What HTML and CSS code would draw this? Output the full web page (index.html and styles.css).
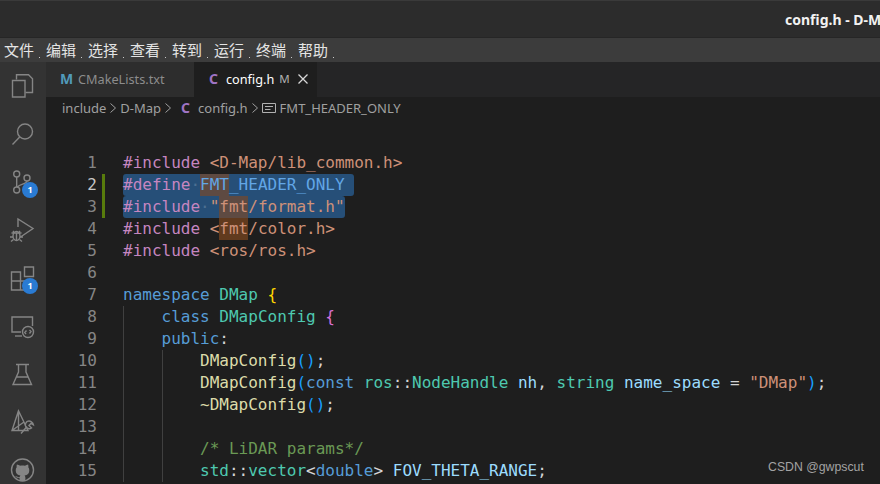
FILE: index.html
```html
<!DOCTYPE html>
<html lang="en">
  <head>
    <meta charset="UTF-8" />
    <title>config.h - D-Map</title>
    <link rel="stylesheet" href="styles.css">
  </head>
  <body>
    <div class="titlebar"><span class="title">config.h - D-M</span></div>
    <div class="menubar">
      <span class="menu-item">文件</span>
      <span class="menu-item">编辑</span>
      <span class="menu-item">选择</span>
      <span class="menu-item">查看</span>
      <span class="menu-item">转到</span>
      <span class="menu-item">运行</span>
      <span class="menu-item">终端</span>
      <span class="menu-item">帮助</span>
    </div>
    <div class="main">
      <div class="activitybar">
        <div class="activity">
          <svg viewBox="0 0 24 24"><path d="M5.5 5.5V.8H17.5L21.5 4.8V18.5H14.5"/><path d="M1.5 6.5H14V23H1.5Z"/></svg>
        </div>
        <div class="activity">
          <svg viewBox="0 0 24 24"><circle cx="14" cy="9.5" r="7.5"/><path d="M8.7 15L1.5 22.5"/></svg>
        </div>
        <div class="activity">
          <svg viewBox="0 0 24 24"><circle cx="5.7" cy="4" r="3"/><circle cx="5.7" cy="20" r="3"/><circle cx="16" cy="8" r="3"/><path d="M5.7 7V17M16 11C16 14 9 14 6.5 17"/></svg>
          <span class="badge">1</span>
        </div>
        <div class="activity">
          <svg viewBox="0 0 24 24"><path d="M7 9V1L22 10.5L9.5 19"/><ellipse cx="5.5" cy="18" rx="3.5" ry="4.5"/><path d="M.5 15H10.5M5.5 15V22.5M-1 19H2M9 19H12M0 23.5L2.5 21.5M11 23.5L8.5 21.5M2 13L3.5 15M9 13L7.5 15"/></svg>
        </div>
        <div class="activity">
          <svg viewBox="0 0 24 24"><path d="M13.5 1H22.5V10.5H13.5Z"/><path d="M.5 6H9.5V24H.5ZM.5 15H18.5V24H9.5"/></svg>
          <span class="badge">1</span>
        </div>
        <div class="activity">
          <svg viewBox="0 0 24 24"><path d="M10 18H1V3H21.5V12"/><path d="M4 22H11"/><circle cx="17" cy="18" r="5.5"/><path d="M15.5 16.5L13.8 18.5L15 20M18.5 16L20 17.5L18.5 19.5"/></svg>
        </div>
        <div class="activity">
          <svg viewBox="0 0 24 24"><path d="M5 2.5H18M7.5 2.5V10L2 22.5H20.5L15 10V2.5M5.5 15H17"/></svg>
        </div>
        <div class="activity">
          <svg viewBox="0 0 24 24"><path d="M7.5.8L1 20.5H17L7.5.8ZM7.5.8V20.5M1 20.5L13 12"/><path class="wrench" d="M10 23.5L16 16.5M14.5 13.5A4 4 0 0 0 20.5 18L18 15.5L20 13.5L22.5 15A4.5 4.5 0 0 0 16 11.5Z"/></svg>
        </div>
        <div class="activity">
          <svg viewBox="0 0 24 24"><circle cx="11.5" cy="12" r="11"/><path class="solid" d="M8.5 23V20C5.5 20.3 4.8 18.8 4.3 18L6.5 18.8C7.3 19.5 8 19.3 8.7 19C8.7 18.4 9 17.8 9.4 17.5C6.5 17 4.7 15.5 4.7 12.2C4.7 11 5.1 10.1 5.7 9.3C5.5 8.5 5.5 7.4 5.9 6.5C7.1 6.6 8.2 7.2 9 7.8C10.7 7.4 12.5 7.4 14 7.8C14.9 7.2 16 6.6 17.1 6.5C17.5 7.4 17.5 8.5 17.3 9.3C17.9 10.1 18.3 11 18.3 12.2C18.3 15.5 16.5 17 13.6 17.5C14.1 18 14.4 18.8 14.4 19.8V23Z"/></svg>
        </div>
      </div>
      <div class="workbench">
        <div class="tabs">
          <div class="tab">
            <span class="file-icon cmake">M</span>
            <span>CMakeLists.txt</span>
          </div>
          <div class="tab active">
            <span class="file-icon cfile">C</span>
            <span class="tab-name">config.h</span>
            <span class="tab-status">M</span>
            <svg class="tab-close" viewBox="0 0 12 12"><path d="M1.5 1.5L10.5 10.5M10.5 1.5L1.5 10.5"/></svg>
          </div>
        </div>
        <div class="breadcrumbs">
          <span>include</span>
          <svg class="chevron" viewBox="0 0 8 12"><path d="M1.5 1.5L6.5 6L1.5 10.5"/></svg>
          <span>D-Map</span>
          <svg class="chevron" viewBox="0 0 8 12"><path d="M1.5 1.5L6.5 6L1.5 10.5"/></svg>
          <span class="file-icon cfile crumb-icon">C</span>
          <span>config.h</span>
          <svg class="chevron" viewBox="0 0 8 12"><path d="M1.5 1.5L6.5 6L1.5 10.5"/></svg>
          <svg class="symbol" viewBox="0 0 14 12"><path d="M.5 1.5H13.5V10.5H.5ZM3 4.5H11M3 7.5H8.5"/></svg>
          <span>FMT_HEADER_ONLY</span>
        </div>
        <div class="editor">
          <div class="gutter">
            <div class="num">1</div>
            <div class="num current">2<i class="dirty"></i></div>
            <div class="num">3<i class="dirty"></i></div>
            <div class="num">4</div>
            <div class="num">5</div>
            <div class="num">6</div>
            <div class="num">7</div>
            <div class="num">8</div>
            <div class="num">9</div>
            <div class="num">10</div>
            <div class="num">11</div>
            <div class="num">12</div>
            <div class="num">13</div>
            <div class="num">14</div>
            <div class="num">15</div>
          </div>
          <div class="code">
            <div class="line"><span class="pp">#include</span> <span class="str">&lt;D-Map/lib_common.h&gt;</span></div>
            <div class="line"><span class="sel sel-eol"><span class="pp">#define</span><span class="ws">·</span><span class="word-sel macro">FMT</span><span class="macro">_HEADER_ONLY</span></span></div>
            <div class="line"><span class="sel"><span class="pp">#include</span><span class="ws">·</span><span class="str">"<span class="word-sel">fmt</span>/format.h"</span></span></div>
            <div class="line"><span class="pp">#include</span> <span class="str">&lt;<span class="word">fmt</span>/color.h&gt;</span></div>
            <div class="line"><span class="pp">#include</span> <span class="str">&lt;ros/ros.h&gt;</span></div>
            <div class="line"></div>
            <div class="line"><span class="kw">namespace</span> <span class="ty">DMap</span> <span class="b1">{</span></div>
            <div class="line"><i class="ind"></i><span class="kw">class</span> <span class="ty">DMapConfig</span> <span class="b2">{</span></div>
            <div class="line"><i class="ind"></i><span class="kw">public</span><span class="pl">:</span></div>
            <div class="line"><i class="ind"></i><i class="ind"></i><span class="fn">DMapConfig</span><span class="b3">()</span><span class="pl">;</span></div>
            <div class="line"><i class="ind"></i><i class="ind"></i><span class="fn">DMapConfig</span><span class="b3">(</span><span class="kw">const</span> <span class="ty">ros</span><span class="pl">::</span><span class="ty">NodeHandle</span> <span class="var">nh</span><span class="pl">,</span> <span class="ty">string</span> <span class="var">name_space</span> <span class="pl">=</span> <span class="str">"DMap"</span><span class="b3">)</span><span class="pl">;</span></div>
            <div class="line"><i class="ind"></i><i class="ind"></i><span class="fn">~DMapConfig</span><span class="b3">()</span><span class="pl">;</span></div>
            <div class="line"><i class="ind"></i><i class="ind"></i></div>
            <div class="line"><i class="ind"></i><i class="ind"></i><span class="com">/* LiDAR params*/</span></div>
            <div class="line"><i class="ind"></i><i class="ind"></i><span class="ty">std</span><span class="pl">::</span><span class="ty">vector</span><span class="pl">&lt;</span><span class="kw">double</span><span class="pl">&gt;</span> <span class="var">FOV_THETA_RANGE</span><span class="pl">;</span></div>
          </div>
        </div>
      </div>
    </div>
    <div class="watermark">CSDN @gwpscut</div>
  </body>
</html>
```

FILE: styles.css
```css
html,
body {
  height: 100%;
}
body {
  margin: 0;
  display: flex;
  flex-direction: column;
  overflow: hidden;
  background-color: #1e1e1e;
  font-family: "Noto Sans", "Noto Sans CJK SC", sans-serif;
}

/* title and menu */
.titlebar {
  height: 36px;
  flex: none;
  display: flex;
  align-items: center;
  padding-left: 785px;
  overflow: hidden;
  background-color: #2c2c2c;
  border-top: 1px solid #3a3a3a;
}
.title {
  font-size: 14px;
  font-weight: 700;
  color: #f2f2f2;
  white-space: nowrap;
}
.menubar {
  height: 25px;
  box-sizing: border-box;
  flex: none;
  display: flex;
  align-items: center;
  padding-left: 4px;
  padding-bottom: 2px;
  background-color: #3c3c3c;
  border-top: 1px solid #262626;
}
.menu-item {
  position: relative;
  width: 42px;
  font-family: "Noto Sans CJK SC", sans-serif;
  font-size: 15px;
  color: #e4e4e4;
}
.menu-item::after {
  content: "";
  position: absolute;
  left: 35px;
  bottom: 2px;
  width: 1px;
  height: 1px;
  background-color: #c8c8c8;
}

/* activity bar */
.main {
  flex: 1;
  min-height: 0;
  display: flex;
}
.activitybar {
  width: 46px;
  flex: none;
  background-color: #333333;
}
.activity {
  position: relative;
  height: 48px;
  display: flex;
  align-items: center;
  justify-content: center;
}
.activity svg {
  width: 24px;
  height: 24px;
  fill: none;
  stroke: #858585;
  stroke-width: 1.4;
  overflow: visible;
}
.activity svg .solid {
  fill: #858585;
  stroke: none;
}
.activity svg .wrench {
  fill: #333333;
}
.badge {
  position: absolute;
  left: 22px;
  top: 24px;
  width: 16px;
  height: 16px;
  border-radius: 50%;
  background-color: #2a7bd3;
  color: white;
  font-size: 9px;
  font-weight: 700;
  line-height: 16px;
  text-align: center;
}

/* tabs */
.workbench {
  flex: 1;
  min-width: 0;
  display: flex;
  flex-direction: column;
}
.tabs {
  height: 35px;
  flex: none;
  display: flex;
  background-color: #252526;
}
.tab {
  width: 148px;
  padding-left: 14px;
  padding-bottom: 2px;
  box-sizing: border-box;
  display: flex;
  align-items: center;
  background-color: #2d2d2d;
  color: #8c8c8c;
  font-size: 12.7px;
}
.tab.active {
  width: 123px;
  padding-left: 15px;
  background-color: #1e1e1e;
  color: white;
}
.tab.active .file-icon {
  width: 17px;
}
.file-icon {
  width: 18px;
  font-weight: 700;
  font-size: 14px;
}
.cmake {
  color: #519aba;
}
.cfile {
  color: #a074c4;
}
.tab-status {
  margin-left: 5px;
  color: #b0b0b0;
  font-size: 11.5px;
}
.tab-close {
  width: 12px;
  height: 12px;
  margin-left: 7px;
  fill: none;
  stroke: #d8d8d8;
  stroke-width: 1.3;
}

/* breadcrumbs */
.breadcrumbs {
  height: 23px;
  box-sizing: border-box;
  flex: none;
  display: flex;
  align-items: center;
  padding-left: 16px;
  padding-bottom: 2px;
  color: #a0a0a0;
  font-size: 13px;
}
.chevron {
  width: 8px;
  height: 12px;
  margin: 0 3px;
  fill: none;
  stroke: #a0a0a0;
  stroke-width: 1;
}
.crumb-icon {
  margin-left: 6px;
  width: 17px;
}
.symbol {
  width: 14px;
  height: 12px;
  margin-right: 4px;
  fill: none;
  stroke: #b0b0b0;
  stroke-width: 1;
}

/* code */
.editor {
  flex: 1;
  min-height: 0;
  padding-top: 32px;
  display: flex;
  overflow: hidden;
  font-family: "DejaVu Sans Mono", monospace;
  font-size: 16px;
}
.gutter {
  width: 77px;
  flex: none;
}
.num {
  position: relative;
  width: 51px;
  height: 22px;
  line-height: 22px;
  text-align: right;
  color: #858585;
}
.num.current {
  color: #c6c6c6;
}
.dirty {
  position: absolute;
  left: 56px;
  top: 0;
  width: 3px;
  height: 22px;
  background-color: #587c0c;
}
.code {
  flex: 1;
  min-width: 0;
}
.line {
  height: 22px;
  line-height: 22px;
  white-space: pre;
  color: #d4d4d4;
}
.ind {
  display: inline-block;
  width: 4ch;
  height: 22px;
  vertical-align: top;
  box-shadow: inset 1px 0 0 #404040;
}
.sel {
  display: inline-block;
  height: 22px;
  background-color: #264f78;
  border-radius: 3px;
}
.sel-eol {
  padding-right: 1ch;
}
.ws {
  color: #4d6f92;
}
.word {
  display: inline-block;
  height: 22px;
  background-color: #613a1e;
}
.word-sel {
  display: inline-block;
  height: 22px;
  background-color: #5e4a42;
}
.pp { color: #c586c0; }
.str { color: #ce9178; }
.kw { color: #569cd6; }
.macro { color: #62a6e6; }
.ty { color: #4ec9b0; }
.fn { color: #dcdcaa; }
.var { color: #9cdcfe; }
.com { color: #6a9955; }
.pl { color: #d4d4d4; }
.b1 { color: #ffd700; }
.b2 { color: #da70d6; }
.b3 { color: #179fff; }

.watermark {
  position: absolute;
  left: 768px;
  top: 460px;
  color: #a3a3a3;
  font-family: "Liberation Sans", sans-serif;
  font-size: 12.3px;
  white-space: nowrap;
}
```
